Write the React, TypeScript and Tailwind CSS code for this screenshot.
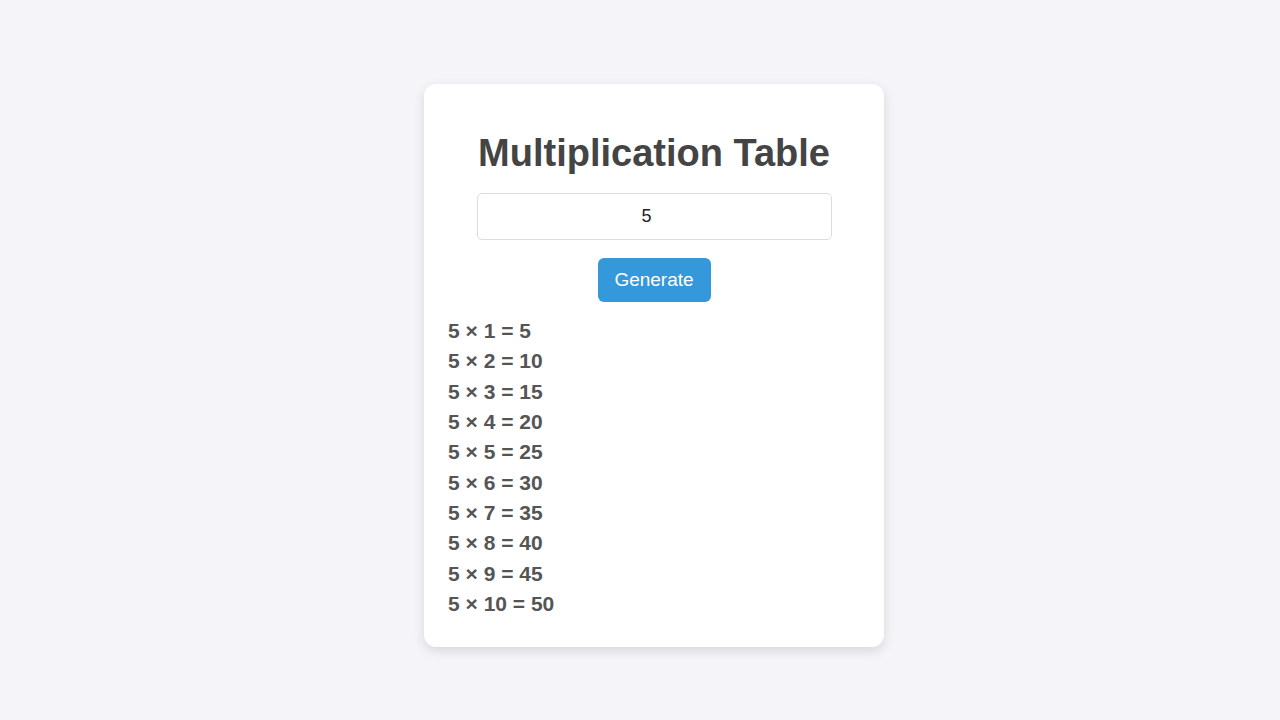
import React, { useState } from "react";

export default function App() {
  const [n, setN] = useState("5");
  const [rows, setRows] = useState<number>(5);
  const generate = () => {
    const v = parseInt(n, 10);
    if (!isNaN(v)) setRows(v);
  };
  return (
    <div
      className="min-h-screen w-full bg-[#f4f4f9] flex justify-center pt-[84px] pl-[28px]"
      style={{ fontFamily: '"Liberation Sans", Arial, sans-serif' }}
    >
      <div className="w-[460px] h-[563px] bg-white rounded-[12px] shadow-[0_4px_12px_rgba(0,0,0,0.12)] px-6 pt-[47px] flex flex-col">
        <h1 className="text-[38px] leading-[44px] font-bold text-[#444] text-center">
          Multiplication Table
        </h1>
        <div className="flex justify-center mt-[18px]">
          <input
            type="number"
            value={n}
            onChange={(e) => setN(e.target.value)}
            className="w-[355px] h-[47px] border border-[#ddd] rounded-[5px] text-center text-[18px] text-[#222] outline-none"
          />
        </div>
        <div className="flex justify-center mt-[18px]">
          <button
            onClick={generate}
            className="w-[113px] h-[44px] bg-[#3498db] text-white text-[19px] rounded-[6px]"
          >
            Generate
          </button>
        </div>
        <div className="mt-[14px] flex flex-col">
          {Array.from({ length: 10 }, (_, i) => (
            <div
              key={i}
              className="text-[21px] leading-[30.33px] font-bold text-[#555]"
            >
              {rows} × {i + 1} = {rows * (i + 1)}
            </div>
          ))}
        </div>
      </div>
    </div>
  );
}
